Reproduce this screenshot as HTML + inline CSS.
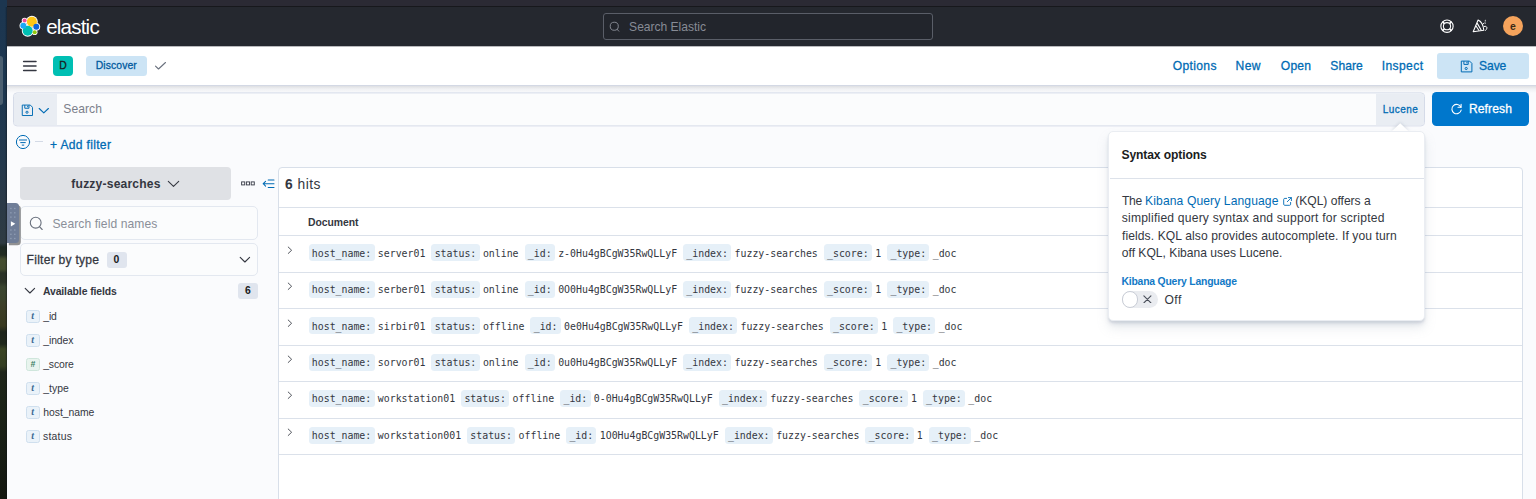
<!DOCTYPE html>
<html lang="en">
<head>
<meta charset="utf-8">
<title>Discover - Elastic</title>
<style>
*{box-sizing:border-box;margin:0;padding:0}
html,body{width:1536px;height:499px;overflow:hidden;background:#fafbfd;font-family:"Liberation Sans",Arial,sans-serif;color:#343741}
body{position:relative}
.abs{position:absolute}
.t{position:absolute;white-space:nowrap;line-height:1}
/* wallpaper strip + os top strip */
#wall{left:0;top:0;width:7px;height:499px;background:linear-gradient(180deg,#1c3650 0px,#1d3750 100px,#24394d 160px,#2b3a47 205px,#2f3b42 243px,#1e2a24 247px,#232d22 255px,#454e30 259px,#434c2f 269px,#2a3226 273px,#2b3326 282px,#3a4530 287px,#3b432c 299px,#3d3f28 305px,#38391f 326px,#1e241b 332px,#20271b 344px,#3a4424 349px,#343e22 366px,#1f261b 372px,#1c2418 400px,#181e15 450px,#14170f 499px)}
#osbar{left:7px;top:0;width:1529px;height:6px;background:#2b2a34}
#osline{left:7px;top:6px;width:1529px;height:1px;background:#17181c}
#hdr{left:7px;top:7px;width:1529px;height:39px;background:#25282f}
#hdr2{left:7px;top:46px;width:1529px;height:40px;background:#fff;border-bottom:1px solid #d3d8e4}
a{color:#006bb4;text-decoration:none}
#logo{left:19px;top:15px;width:22px;height:23px}
#elastic{left:46px;top:15px;font-size:20.5px;letter-spacing:-.75px;color:#fff;line-height:23px}
#gsearch{left:603px;top:13px;width:330px;height:27px;border:1px solid #5a5e68;border-radius:3px;background:#22252c}
#gsearch span{left:25px;top:.5px;line-height:25px;font-size:12.1px;color:#878b95}


/* header right icons */
#avatar{left:1503px;top:16px;width:20px;height:20px;border-radius:50%;background:#f5a35c}
#avatar span{left:0;width:20px;text-align:center;top:0;line-height:21px;font-size:10.5px;font-weight:bold;color:#3a2a17}
/* second header */
.hb{left:23px;width:13.5px;height:1.4px;background:#343741}
#dav{left:53px;top:56px;width:20px;height:20px;border-radius:4px;background:#00bfb3}
#dav span{left:0;width:20px;text-align:center;line-height:20px;font-size:10.4px;font-weight:normal;-webkit-text-stroke:.3px #1a1c21;color:#1a1c21}
#disc{left:86px;top:56px;width:61px;height:20px;border-radius:3.5px;background:#cce4f5}
#disc span{left:10px;line-height:20px;font-size:10.4px;font-weight:bold;color:#005a9e}
.nav{top:58px;line-height:16px;font-size:12.1px;color:#006bb4}
#save{left:1437px;top:53px;width:92px;height:26px;border-radius:3px;background:#cce4f5}
#refresh{left:1432px;top:92px;width:97.4px;height:33.5px;border-radius:4.5px;background:#0077cc}

/* query bar */
#qbar{left:13px;top:92px;width:1412px;height:33.5px;border:1px solid #d5dbe8;border-radius:4px;background:#fbfcfd;overflow:hidden;transform:translateY(.4px)}
#qpre{left:0;top:0;width:43px;height:32px;background:#e9edf3}
#qapp{right:0;top:0;width:48px;height:32px;background:#e9edf3}
#t_search{left:64px;top:101.4px;line-height:16px;font-size:12.1px;color:#7b808b}
#t_lucene{left:1383.5px;top:102px;line-height:16px;font-size:10px;font-weight:bold;color:#006bb4}
#t_addf{left:50.500px;top:136.500px;line-height:16px;font-size:12.1px;font-weight:bold;color:#006bb4}
/* sidebar */
#ipbtn{left:20px;top:167px;width:211px;height:33px;border-radius:4px;background:#dfe1e5}
#t_ip{left:71.5px;top:176px;line-height:16px;font-size:12.1px;font-weight:bold;color:#343741}
.fld{left:20px;width:238px;border:1px solid #e3e8f0;border-radius:5px;background:#fbfcfd}
#t_sfn{left:53px;top:216px;line-height:16px;font-size:12.1px;color:#8a8f99}
#t_fbt{left:27px;top:252px;line-height:16px;font-size:12.1px;color:#343741}
.nbadge{background:#e0e5ee;border-radius:3px;text-align:center;font-size:10.4px;font-weight:bold;color:#1a1c21}
#t_af{left:43px;top:284px;line-height:16px;font-size:10.4px;font-weight:bold;color:#343741}
.tok{left:26px;width:13.5px;height:12.5px;border-radius:2.5px;border:1px solid #cfdfee;background:#eaf2f9;font-family:"Liberation Serif",serif;font-style:italic;font-weight:bold;font-size:10px;line-height:10px;text-align:center;color:#3b6a95}
.tok.n{border-color:#cfe6dc;background:#e8f4ee;color:#3a7d62;font-family:"Liberation Sans",sans-serif;font-size:8.500px;line-height:11px}
.fn{left:43px;line-height:16px;font-size:10.4px;color:#343741}

/* main panel */
#panel{left:278px;top:167px;width:1245px;height:360px;border:1px solid #d8dfe9;border-radius:4px;background:#fff}
#t_hits{left:285.5px;top:176.8px;line-height:16px;font-size:13.8px;color:#343741}
.hl{left:279px;width:1243px;height:1px;background:#dbe1ea}
#t_doc{left:308.5px;top:214.6px;line-height:16px;font-size:10.4px;font-weight:bold;color:#343741}
.row{left:308.5px;height:17px;line-height:17px;font-family:"DejaVu Sans Mono","Liberation Mono",monospace;font-size:9.9px;color:#343741;white-space:pre}
.row b{font-weight:normal;display:inline-block;position:relative;z-index:0;height:17px;line-height:17px;padding:0 3.3px;margin-right:3.3px}

/* popover */
#pop{left:1108px;top:131px;width:316.5px;height:189.5px;border:1px solid #eaedf2;border-radius:5px;background:#fff;box-shadow:0 7px 12px -1px rgba(152,162,179,.25),0 4px 4px -1px rgba(152,162,179,.2),0 2px 2px 0 rgba(152,162,179,.2)}
#parrow{left:1388px;top:120px;filter:drop-shadow(0 -1px 1.500px rgba(152,162,179,.35))}
#parrowfill{left:1390px;top:131.500px;width:21px;height:3px;background:#fff}
#t_syn{left:1122px;top:146.500px;line-height:16px;font-size:12.1px;font-weight:bold;color:#1a1c21}
.pl{left:1122px;line-height:17.400px;font-size:12.1px;color:#343741}
#t_kql{left:1122px;top:273.8px;line-height:16px;font-size:10.4px;font-weight:bold;color:#1279c6}
#sw{left:1121.5px;top:291px;width:36.5px;height:16.5px;border-radius:9px;background:#eaecf0}
#knob{left:1121.500px;top:291px;width:16.500px;height:16.500px;border-radius:50%;background:#fff;border:1px solid #c9cdd6}
#t_off{left:1165px;top:292px;line-height:16px;font-size:12.1px;color:#343741}
/*FIT*/#t_options{margin-left:-0.15px;letter-spacing:0.315px}#t_new{margin-left:-0.46px;letter-spacing:0.416px}#t_open{margin-left:-0.15px;letter-spacing:0.184px}#t_share{margin-left:-0.68px;letter-spacing:0.046px}#t_inspect{margin-left:-0.85px;letter-spacing:0.402px}#t_save{margin-left:-0.90px;letter-spacing:-0.116px}#t_refresh{margin-left:-1.11px;letter-spacing:0.107px}#t_lucene{margin-left:-0.69px;letter-spacing:0.438px}#t_disc{margin-left:-0.34px;letter-spacing:0.100px}#t_gs{margin-left:0.12px;letter-spacing:-0.030px}#t_search{margin-left:-0.76px;letter-spacing:0.075px}#t_addf{margin-left:-0.50px;letter-spacing:0.312px}#t_ip{margin-left:-0.17px;letter-spacing:0.188px}#t_sfn{margin-left:-0.57px;letter-spacing:0.077px}#t_fbt{margin-left:-0.43px;letter-spacing:0.250px}#t_af{margin-left:-0.10px;letter-spacing:-0.087px}#t_f0{margin-left:0.27px;letter-spacing:-0.153px}#t_f1{margin-left:0.28px;letter-spacing:-0.087px}#t_f2{margin-left:0.20px;letter-spacing:-0.123px}#t_f3{margin-left:0.21px;letter-spacing:0.048px}#t_f4{margin-left:0.35px;letter-spacing:-0.051px}#t_f5{margin-left:-0.01px;letter-spacing:0.230px}#t_hits{margin-left:-0.45px;letter-spacing:0.464px}#t_doc{margin-left:-0.44px;letter-spacing:-0.054px}#t_syn{margin-left:-0.56px;letter-spacing:-0.109px}#t_p1a{margin-left:0.10px;letter-spacing:-0.400px}#t_p1b{margin-left:-0.90px;letter-spacing:0.110px}#t_p1c{margin-left:-0.81px;letter-spacing:-0.017px}#t_p2{margin-left:-0.26px;letter-spacing:0.210px}#t_p3{margin-left:-0.07px;letter-spacing:0.100px}#t_p4{margin-left:-0.25px;letter-spacing:0.006px}#t_kql{margin-left:-0.60px;letter-spacing:-0.199px}#t_off{margin-left:-0.53px;letter-spacing:0.468px}#elastic{margin-left:0.19px;letter-spacing:-0.775px}/*ENDFIT*/
.md{font-weight:normal!important;-webkit-text-stroke:.28px currentColor}
#handle{left:7px;top:202.5px;width:12.3px;height:40.2px;background:#6f7d97;border-radius:0 3.5px 3.5px 0;box-shadow:1.8px 2.2px 0.6px rgba(110,110,110,.75)}
.row b::before{content:"";position:absolute;z-index:-1;left:0;right:0;top:-.4px;height:17.2px;background:#e6f0f8;border-radius:3.5px}
</style>
</head>
<body>
<div id="wall" class="abs"></div><div class="abs" style="left:0;top:56px;width:3.300px;height:49px;border-radius:0 3px 3px 0;background:#4b5f70"></div><div class="abs" style="left:5px;top:7px;width:2px;height:492px;background:linear-gradient(90deg,rgba(10,14,20,0),rgba(10,14,20,.45))"></div>
<div id="osbar" class="abs"></div>
<div id="osline" class="abs"></div><div class="abs" style="left:7px;top:0;width:1529px;height:2px;overflow:hidden"><span class="t" style="left:35.5px;top:-13.900px;width:6px;text-align:center;font-size:13px;line-height:13px;color:#e8e8ee">y</span><span class="t" style="left:89.0px;top:-13.900px;width:6px;text-align:center;font-size:13px;line-height:13px;color:#e8e8ee">p</span><span class="t" style="left:136.0px;top:-13.900px;width:6px;text-align:center;font-size:13px;line-height:13px;color:#e8e8ee">y</span><span class="t" style="left:177.5px;top:-13.900px;width:6px;text-align:center;font-size:13px;line-height:13px;color:#e8e8ee">,</span><span class="t" style="left:196.6px;top:-13.900px;width:6px;text-align:center;font-size:13px;line-height:13px;color:#e8e8ee">y</span><span class="t" style="left:263.4px;top:-13.900px;width:6px;text-align:center;font-size:13px;line-height:13px;color:#e8e8ee">p</span><span class="t" style="left:270.7px;top:-13.900px;width:6px;text-align:center;font-size:13px;line-height:13px;color:#e8e8ee">p</span><span class="t" style="left:369.7px;top:-13.900px;width:6px;text-align:center;font-size:13px;line-height:13px;color:#e8e8ee">y</span><span class="t" style="left:435.5px;top:-13.900px;width:6px;text-align:center;font-size:13px;line-height:13px;color:#e8e8ee">g</span><span class="t" style="left:567.3px;top:-13.900px;width:6px;text-align:center;font-size:13px;line-height:13px;color:#e8e8ee">g</span><span class="t" style="left:728.0px;top:-13.900px;width:6px;text-align:center;font-size:13px;line-height:13px;color:#e8e8ee">g</span><span class="t" style="left:822.0px;top:-13.900px;width:6px;text-align:center;font-size:13px;line-height:13px;color:#e8e8ee">y</span><span class="t" style="left:840.6px;top:-13.900px;width:6px;text-align:center;font-size:13px;line-height:13px;color:#e8e8ee">p</span><span class="t" style="left:852.7px;top:-13.900px;width:6px;text-align:center;font-size:13px;line-height:13px;color:#e8e8ee">p</span></div>

<div id="hdr" class="abs"></div>
<div id="hdr2" class="abs"></div><div class="abs" style="left:7px;top:46px;width:1529px;height:1px;background:#b9babd"></div><div class="abs" style="left:7px;top:86px;width:1529px;height:7px;background:linear-gradient(rgba(110,112,120,.2),rgba(110,112,120,.07) 45%,rgba(110,112,120,0))"></div>
<svg id="logo" class="abs" viewBox="0 0 22 23">
 <g fill="#fff"><circle cx="12.9" cy="6.7" r="5.9"/><circle cx="8.7" cy="15.8" r="5.9"/><circle cx="5.6" cy="5.6" r="2.9"/><circle cx="4.3" cy="10.7" r="3.8"/><circle cx="17.3" cy="11.8" r="3.9"/><circle cx="15.7" cy="17.2" r="2.8"/></g>
 <circle cx="12.9" cy="6.7" r="5" fill="#fec514"/>
 <circle cx="8.7" cy="15.8" r="5" fill="#00bfb3"/>
 <circle cx="5.6" cy="5.6" r="2" fill="#f04e98"/>
 <circle cx="4.3" cy="10.7" r="3" fill="#1ba9f5"/>
 <circle cx="17.3" cy="11.8" r="3" fill="#0b64dd"/>
 <circle cx="15.7" cy="17.2" r="2" fill="#93c90e"/>
</svg>
<div id="elastic" class="t">elastic</div>
<div id="gsearch" class="abs">
 <svg class="abs" style="left:5px;top:7px" width="11.400" height="11.400" viewBox="0 0 13 13"><circle cx="6" cy="6" r="4.600" fill="none" stroke="#878b95" stroke-width="1.1"/><path d="M9.2 9.4l2 2.2" stroke="#878b95" stroke-width="1.1" stroke-linecap="round"/></svg>
 <span class="t" id="t_gs">Search Elastic</span>
</div>


<svg class="abs" style="left:1437.900px;top:17.400px" width="18" height="18" viewBox="0 0 18 18" fill="none" stroke="#fff" stroke-width="1.1">
 <circle cx="9" cy="9.2" r="6.150"/><circle cx="9" cy="9.2" r="3.6"/>
 <path d="M4.5 4.7l1.9 1.9M13.5 4.7l-1.9 1.9M4.5 13.7l1.9-1.9M13.5 13.7l-1.9-1.9" stroke-width="1.7"/>
</svg>
<svg class="abs" style="left:1471px;top:17px" width="18" height="18" viewBox="0 0 18 18" fill="none" stroke="#fff" stroke-width="1.100" stroke-linejoin="round" stroke-linecap="round">
 <path d="M2.200 14.700L7.100 3c3.200 1.500 5.300 5.400 5.700 10.200z"/><path d="M5.200 9.300l2.600 3.900M6.400 6.600l3.600 6.200"/>
 <path d="M13.300 9.400c1.500-.7 2.800.5 2.600 1.800-.1 1-.7 1.700-1.400 2.200M11.700 7.300l1.300-1.100" stroke-width="1"/><path d="M14.200 5.900v.5M14.600 3.100c-.4.300-.5.600-.4 1" stroke-width=".9"/>
</svg>
<div id="avatar" class="abs"><span class="t">e</span></div>

<svg class="abs" style="left:22px;top:59px" width="16" height="14" viewBox="0 0 16 14" stroke="#343741" stroke-width="1.500" stroke-linecap="round"><path d="M1.600 2.600h12.400M1.600 7.100h12.400M1.600 11.600h12.400"/></svg>
<div id="dav" class="abs"><span class="t">D</span></div>
<div id="disc" class="abs"><span class="t md" id="t_disc">Discover</span></div>
<svg class="abs" style="left:154px;top:61px" width="13" height="10" viewBox="0 0 13 10" fill="none" stroke="#69707d" stroke-width="1.1" stroke-linecap="round" stroke-linejoin="round"><path d="M1.500 5.200l3 2.800 7-6.500"/></svg>
<div class="t nav md" id="t_options" style="left:1173px">Options</div>
<div class="t nav md" id="t_new" style="left:1236px">New</div>
<div class="t nav md" id="t_open" style="left:1281px">Open</div>
<div class="t nav md" id="t_share" style="left:1331px">Share</div>
<div class="t nav md" id="t_inspect" style="left:1382.500px">Inspect</div>
<div id="save" class="abs">
 <svg class="abs" style="left:23px;top:7px" width="13" height="13" viewBox="0 0 13 13" fill="none" stroke="#006bb4" stroke-width="1"><path d="M1.300 1.100h8.300l2.300 2.300v8.500H1.300z" stroke-linejoin="round"/><path d="M3.900 1.100v3.300h4.300V1.100M6.900 1.800v1.500"/><circle cx="6.200" cy="8.500" r="1.100"/></svg>
 <span class="t nav md" id="t_save" style="left:43px;top:5px">Save</span>
</div>
<div id="refresh" class="abs">
 <svg class="abs" style="left:18px;top:10px" width="13" height="13" viewBox="0 0 13 13" fill="none" stroke="#fff" stroke-width="1.1" stroke-linecap="round"><path d="M10.900 5.200A4.700 4.700 0 1 0 11.200 8"/><path d="M11.100 2.200v3.100H8" stroke-linejoin="round"/></svg>
 <span class="t md" id="t_refresh" style="left:38px;top:8.500px;line-height:16px;font-size:12.1px;color:#fff;font-weight:bold">Refresh</span>
</div>

<div id="qbar" class="abs"><div id="qpre" class="abs"></div><div id="qapp" class="abs"></div></div>
<svg class="abs" style="left:20.600px;top:104.300px" width="12.600" height="12.600" viewBox="0 0 13 13" fill="none" stroke="#006bb4" stroke-width="1"><path d="M1.300 1.100h8.300l2.300 2.300v8.500H1.300z" stroke-linejoin="round"/><path d="M3.900 1.100v3.300h4.300V1.100M6.900 1.800v1.500"/><circle cx="6.200" cy="8.500" r="1.100"/></svg>
<svg class="abs" style="left:38px;top:106.500px" width="12" height="8" viewBox="0 0 12 8" fill="none" stroke="#006bb4" stroke-width="1.1" stroke-linecap="round" stroke-linejoin="round"><path d="M1.200 1.500l4.600 4.400 4.600-4.400"/></svg>
<div class="t" id="t_search">Search</div>
<div class="t md" id="t_lucene">Lucene</div>
<svg class="abs" style="left:15px;top:134px" width="16" height="16" viewBox="0 0 16 16" fill="none" stroke="#006bb4" stroke-width="1" stroke-linecap="round"><circle cx="8" cy="8" r="6.600"/><path d="M4.400 6h7.200M5.700 8.600h4.600M7.200 11.100h1.600"/></svg>
<div class="abs" style="left:35px;top:141px;width:8px;height:1px;background:#d3dae6"></div>
<div class="t md" id="t_addf">+ Add filter</div>

<div id="ipbtn" class="abs"></div>
<div class="t" id="t_ip">fuzzy-searches</div>
<svg class="abs" style="left:167px;top:180px" width="13" height="8" viewBox="0 0 13 8" fill="none" stroke="#343741" stroke-width="1.100" stroke-linecap="round" stroke-linejoin="round"><path d="M1.300 1.300l5.200 5 5.200-5"/></svg>
<svg class="abs" style="left:240.700px;top:181px" width="14" height="5" viewBox="0 0 14 5" fill="none" stroke="#3f434e" stroke-width=".95"><rect x=".6" y=".9" width="3.100" height="3"/><rect x="5.400" y=".9" width="3.100" height="3"/><rect x="10.200" y=".9" width="3.100" height="3"/></svg>
<svg class="abs" style="left:261.600px;top:178.500px" width="13" height="10" viewBox="0 0 13 10" fill="none" stroke="#006bb4" stroke-width="1.050" stroke-linecap="round" stroke-linejoin="round"><path d="M6.200 1h5.800M1.200 4.700h10.800M6.200 8.400h5.800M3.600 2.300L1.200 4.700l2.400 2.400"/></svg>
<div class="abs fld" style="top:206px;height:33.500px"></div>
<svg class="abs" style="left:29px;top:215.500px" width="15" height="15" viewBox="0 0 15 15" fill="none" stroke="#69707d" stroke-width="1.100" stroke-linecap="round"><circle cx="6.700" cy="6.700" r="5.400"/><path d="M10.700 10.900l2.500 2.600"/></svg>
<div class="t" id="t_sfn">Search field names</div>
<div class="abs fld" style="top:243px;height:33px"></div>
<div class="t md" id="t_fbt">Filter by type</div>
<div class="abs nbadge" style="left:106.500px;top:251.500px;width:20px;height:16px;line-height:16px">0</div>
<svg class="abs" style="left:238.700px;top:255.800px" width="12" height="8" viewBox="0 0 12 8" fill="none" stroke="#343741" stroke-width="1.100" stroke-linecap="round" stroke-linejoin="round"><path d="M1.200 1.300l4.700 4.700 4.700-4.700"/></svg>
<svg class="abs" style="left:23.500px;top:287px" width="12" height="8" viewBox="0 0 12 8" fill="none" stroke="#343741" stroke-width="1.100" stroke-linecap="round" stroke-linejoin="round"><path d="M1.200 1.300l4.700 4.700 4.700-4.700"/></svg>
<div class="t" id="t_af">Available fields</div>
<div class="abs nbadge" style="left:238px;top:283px;width:20px;height:16px;line-height:16px">6</div>
<div class="abs tok " style="top:310.2px">t</div><div class="t fn" id="t_f0" style="top:309.0px">_id</div>
<div class="abs tok " style="top:334.2px">t</div><div class="t fn" id="t_f1" style="top:333.0px">_index</div>
<div class="abs tok n" style="top:358.3px">#</div><div class="t fn" id="t_f2" style="top:357.1px">_score</div>
<div class="abs tok " style="top:382.3px">t</div><div class="t fn" id="t_f3" style="top:381.1px">_type</div>
<div class="abs tok " style="top:406.4px">t</div><div class="t fn" id="t_f4" style="top:405.2px">host_name</div>
<div class="abs tok " style="top:430.4px">t</div><div class="t fn" id="t_f5" style="top:429.2px">status</div>

<div id="panel" class="abs"></div>
<div class="t" id="t_hits"><b>6</b> hits</div>
<div class="abs hl" style="top:207px"></div>
<div class="t" id="t_doc">Document</div>
<div class="abs hl" style="top:235px"></div>
<div class="abs hl" style="top:272px"></div>
<div class="abs hl" style="top:308px"></div>
<div class="abs hl" style="top:345px"></div>
<div class="abs hl" style="top:381px"></div>
<div class="abs hl" style="top:418px"></div>
<div class="abs hl" style="top:454px"></div>
<svg class="abs" style="left:287.200px;top:245.7px" width="6" height="8.500" viewBox="0 0 7 10" fill="none" stroke="#343741" stroke-width="1" stroke-linecap="round" stroke-linejoin="round"><path d="M1.400 1.200l4 3.800-4 3.800"/></svg><div class="abs row" style="top:244.7px"><b>host_name:</b>server01 <b>status:</b>online <b>_id:</b>z-0Hu4gBCgW35RwQLLyF <b>_index:</b>fuzzy-searches <b>_score:</b>1 <b>_type:</b>_doc</div>
<svg class="abs" style="left:287.200px;top:282.3px" width="6" height="8.500" viewBox="0 0 7 10" fill="none" stroke="#343741" stroke-width="1" stroke-linecap="round" stroke-linejoin="round"><path d="M1.400 1.200l4 3.800-4 3.800"/></svg><div class="abs row" style="top:281.3px"><b>host_name:</b>serber01 <b>status:</b>online <b>_id:</b>0O0Hu4gBCgW35RwQLLyF <b>_index:</b>fuzzy-searches <b>_score:</b>1 <b>_type:</b>_doc</div>
<svg class="abs" style="left:287.200px;top:318.7px" width="6" height="8.500" viewBox="0 0 7 10" fill="none" stroke="#343741" stroke-width="1" stroke-linecap="round" stroke-linejoin="round"><path d="M1.400 1.200l4 3.800-4 3.800"/></svg><div class="abs row" style="top:317.7px"><b>host_name:</b>sirbir01 <b>status:</b>offline <b>_id:</b>0e0Hu4gBCgW35RwQLLyF <b>_index:</b>fuzzy-searches <b>_score:</b>1 <b>_type:</b>_doc</div>
<svg class="abs" style="left:287.200px;top:355.1px" width="6" height="8.500" viewBox="0 0 7 10" fill="none" stroke="#343741" stroke-width="1" stroke-linecap="round" stroke-linejoin="round"><path d="M1.400 1.200l4 3.800-4 3.800"/></svg><div class="abs row" style="top:354.1px"><b>host_name:</b>sorvor01 <b>status:</b>online <b>_id:</b>0u0Hu4gBCgW35RwQLLyF <b>_index:</b>fuzzy-searches <b>_score:</b>1 <b>_type:</b>_doc</div>
<svg class="abs" style="left:287.200px;top:391.4px" width="6" height="8.500" viewBox="0 0 7 10" fill="none" stroke="#343741" stroke-width="1" stroke-linecap="round" stroke-linejoin="round"><path d="M1.400 1.200l4 3.800-4 3.800"/></svg><div class="abs row" style="top:390.4px"><b>host_name:</b>workstation01 <b>status:</b>offline <b>_id:</b>0-0Hu4gBCgW35RwQLLyF <b>_index:</b>fuzzy-searches <b>_score:</b>1 <b>_type:</b>_doc</div>
<svg class="abs" style="left:287.200px;top:428.1px" width="6" height="8.500" viewBox="0 0 7 10" fill="none" stroke="#343741" stroke-width="1" stroke-linecap="round" stroke-linejoin="round"><path d="M1.400 1.200l4 3.800-4 3.800"/></svg><div class="abs row" style="top:427.1px"><b>host_name:</b>workstation001 <b>status:</b>offline <b>_id:</b>1O0Hu4gBCgW35RwQLLyF <b>_index:</b>fuzzy-searches <b>_score:</b>1 <b>_type:</b>_doc</div>

<svg id="parrow" class="abs" width="26" height="12" viewBox="0 0 26 12"><path d="M3.500 11.500L12.200 3.200l8.700 8.300z" fill="#fff"/></svg>
<div id="pop" class="abs"></div>
<div id="parrowfill" class="abs"></div>
<div class="t" id="t_syn">Syntax options</div>
<div class="abs" style="left:1110px;top:178px;width:313.500px;height:1px;background:#dde2ea"></div>
<div class="t pl" id="t_p1a" style="top:192.9px">The</div>
<div class="t pl" id="t_p1b" style="top:192.9px;left:1146px;color:#006bb4">Kibana Query Language</div>
<svg class="abs" style="left:1283px;top:196.500px" width="9" height="9" viewBox="0 0 9 9" fill="none" stroke="#006bb4" stroke-width=".9" stroke-linecap="round" stroke-linejoin="round"><path d="M3.600 1.400H1.700c-.6 0-1 .4-1 1v4.900c0 .6.400 1 1 1h4.900c.6 0 1-.4 1-1V5.400"/><path d="M5.400.600h3v3M8.200.800L4.300 4.700"/></svg>
<div class="t pl" id="t_p1c" style="top:192.9px;left:1296px">(KQL) offers a</div>
<div class="t pl" id="t_p2" style="top:210.3px">simplified query syntax and support for scripted</div>
<div class="t pl" id="t_p3" style="top:227.6px">fields. KQL also provides autocomplete. If you turn</div>
<div class="t pl" id="t_p4" style="top:244.8px">off KQL, Kibana uses Lucene.</div>
<div class="t" id="t_kql">Kibana Query Language</div>
<div id="sw" class="abs"></div><div id="knob" class="abs"></div>
<svg class="abs" style="left:1142.800px;top:294.700px" width="8.800" height="8.800" viewBox="0 0 8 8" fill="none" stroke="#4a4f5a" stroke-width="1" stroke-linecap="round"><path d="M.8.800l6.400 6.400M7.200.8L.8 7.200"/></svg>
<div class="t" id="t_off">Off</div>
<div id="handle" class="abs"><svg class="abs" style="left:0;top:0" width="13" height="41" viewBox="0 0 13 41"><g fill="#93a0b7"><rect x="3.25" y="4.85" width="1.3" height="1.3"/><rect x="3.25" y="9.15" width="1.3" height="1.3"/><rect x="3.25" y="13.45" width="1.3" height="1.3"/><rect x="3.25" y="26.35" width="1.3" height="1.3"/><rect x="3.25" y="30.65" width="1.3" height="1.3"/><rect x="3.25" y="34.85" width="1.3" height="1.3"/><rect x="7.15" y="4.85" width="1.3" height="1.3"/><rect x="7.15" y="9.15" width="1.3" height="1.3"/><rect x="7.15" y="13.45" width="1.3" height="1.3"/><rect x="7.15" y="26.35" width="1.3" height="1.3"/><rect x="7.15" y="30.65" width="1.3" height="1.3"/><rect x="7.15" y="34.85" width="1.3" height="1.3"/></g><path d="M3.900 18.200l4.400 2.600-4.400 2.600z" fill="#fff"/></svg></div>
</body>
</html>
